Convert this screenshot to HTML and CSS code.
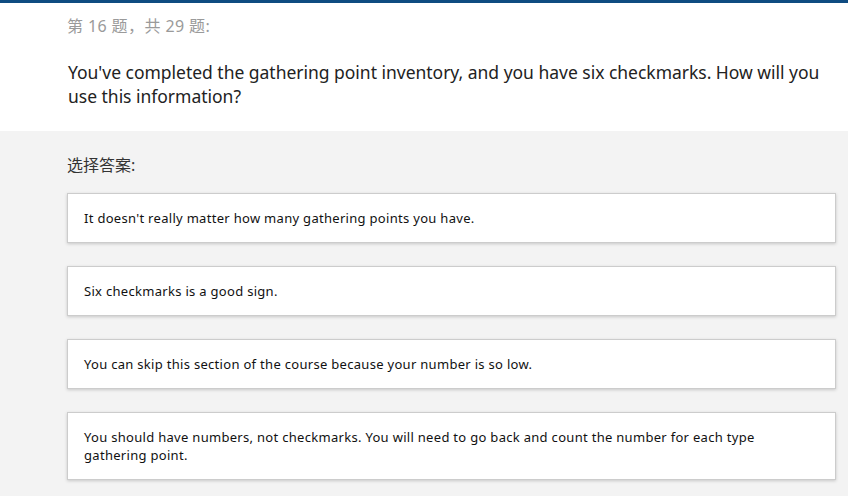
FILE: index.html
```html
<!DOCTYPE html>
<html lang="zh-CN">
<head>
    <meta charset="UTF-8">
    <meta name="viewport" content="width=device-width, initial-scale=1.0">
    <title>第 16 题</title>
    <link rel="stylesheet" href="styles.css">
</head>
<body>
    <div class="top-bar"></div>

    <div class="question-header">
        <div class="inner">
            <p class="counter">第 16 题，共 29 题:</p>
            <p class="question">You've completed the gathering point inventory, and you have six checkmarks. How will you use this information?</p>
        </div>
    </div>

    <div class="answers">
        <div class="inner">
            <p class="answers-title">选择答案:</p>
            <div class="option">It doesn't really matter how many gathering points you have.</div>
            <div class="option">Six checkmarks is a good sign.</div>
            <div class="option">You can skip this section of the course because your number is so low.</div>
            <div class="option">You should have numbers, not checkmarks. You will need to go back and count the number for each type gathering point.</div>
        </div>
    </div>
</body>
</html>
```

FILE: styles.css
```css
body {
    margin: 0;
    font-family: 'Noto Sans', 'Noto Sans CJK SC', sans-serif;
    background: #f3f3f3;
    color: #222;
}
.top-bar {
    height: 3px;
    background: #0f4c81;
    box-shadow: 0 1px 2px rgba(0, 0, 0, 0.2);
}
.inner {
    margin-left: 67px;
    width: 769px;
}
.question-header {
    background: white;
    padding: 13px 0 23px;
}
.counter {
    margin: 0;
    font-size: 16px;
    line-height: 20px;
    letter-spacing: 0.4px;
    color: #9a9a9a;
}
.question {
    margin: 24px 0 0;
    padding-left: 1px;
    font-size: 17.5px;
    line-height: 24px;
    letter-spacing: -0.02px;
    color: #222;
}
.answers {
    padding: 23px 0 20px;
}
.answers-title {
    margin: 0 0 17px;
    font-size: 16px;
    line-height: 22px;
    color: #333;
}
.option {
    background: white;
    border: 1px solid #ccc;
    box-shadow: 0 1px 3px rgba(0, 0, 0, 0.18);
    padding: 15px 16px 15px;
    margin-bottom: 23px;
    font-size: 13px;
    line-height: 18px;
    letter-spacing: 0.3px;
    color: #111;
}
```
